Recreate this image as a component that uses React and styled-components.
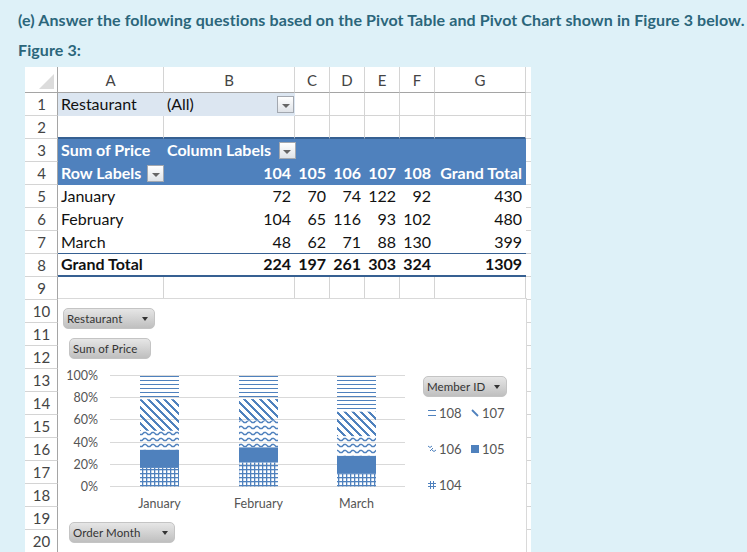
import React from 'react'
import styled, { createGlobalStyle } from 'styled-components'

const COLUMNS = ['A', 'B', 'C', 'D', 'E', 'F', 'G']
const MEMBERS = ['104', '105', '106', '107', '108']
const MONTHS = [
  { name: 'January', values: [72, 70, 74, 122, 92], total: 430, x: 82 },
  { name: 'February', values: [104, 65, 116, 93, 102], total: 480, x: 181 },
  { name: 'March', values: [48, 62, 71, 88, 130], total: 399, x: 279 },
]
const TOTALS = [224, 197, 261, 303, 324]
const TICKS = [
  { label: '100%', y: 10.5 },
  { label: '80%', y: 32.5 },
  { label: '60%', y: 54.5 },
  { label: '40%', y: 77.5 },
  { label: '20%', y: 99.5 },
  { label: '0%', y: 121.5 },
]
const BLUE = '#4f81bd'
const DARK = '#366092'

const Global = createGlobalStyle`
  html, body { margin: 0; padding: 0; }
  body { background: #def1f8; overflow: hidden; height: 552px; }
`

const Page = styled.div`
  width: 747px;
  height: 552px;
  overflow: hidden;
`
const Heading = styled.div`
  padding: 11px 0 0 18px;
  height: 67px;
  box-sizing: border-box;
  font-family: 'Lato', sans-serif;
  font-weight: 700;
  font-size: 16px;
  letter-spacing: 0.1px;
  line-height: 18px;
  color: #2b667b;
  white-space: nowrap;
`
const Figure = styled.div`
  margin-top: 12px;
`
const Sheet = styled.div`
  position: relative;
  margin-left: 25px;
  width: 506px;
  background: #fff;
  display: grid;
  grid-template-columns: 33px 106px 131px repeat(4, 35px) 91px 5px;
  grid-template-rows: 26px;
  grid-auto-rows: 23px;
  font-family: 'Lato', sans-serif;
  font-size: 16px;
  color: #111;
`
const Corner = styled.div`
  border-right: 1px solid #a5a5a5;
  border-bottom: 1px solid #a5a5a5;
  box-sizing: border-box;
  display: flex;
  justify-content: flex-end;
  align-items: flex-end;
  padding: 0 3px 3px 0;
`
const ColHead = styled.div`
  box-sizing: border-box;
  border-right: 1px solid #d4d4d4;
  border-bottom: 1px solid #a5a5a5;
  display: flex;
  align-items: center;
  justify-content: center;
  font-size: 15px;
  color: #444;
`
const RowNum = styled.div`
  box-sizing: border-box;
  border-right: 1px solid #a5a5a5;
  border-bottom: 1px solid #d4d4d4;
  display: flex;
  align-items: center;
  justify-content: center;
  padding-left: 1px;
  font-size: 15px;
  color: #444;
`
const Cell = styled.div`
  box-sizing: border-box;
  display: flex;
  align-items: center;
  justify-content: ${p => (p.$right ? 'flex-end' : 'flex-start')};
  padding: 0 4px 2px 3px;
  white-space: nowrap;
  grid-column: ${p => (p.$span ? `span ${p.$span}` : 'auto')};
  background: ${p => p.$bg || '#fff'};
  color: ${p => p.$color || '#111'};
  font-weight: ${p => (p.$bold ? 700 : 400)};
  border-right: ${p => (p.$plain ? 'none' : '1px solid #d4d4d4')};
  border-bottom: ${p => p.$under || (p.$plain ? 'none' : '1px solid #d4d4d4')};
`
const Tail = styled.div`
  border-bottom: 1px solid #d4d4d4;
`
const Spread = styled.span`
  flex: 1;
`
const FilterBtn = styled.span`
  flex: none;
  width: 17px;
  height: 17px;
  box-sizing: border-box;
  margin-top: 2px;
  margin-left: ${p => p.$gap || 0}px;
  margin-right: ${p => p.$flush || 0}px;
  display: inline-flex;
  align-items: center;
  justify-content: center;
  background: linear-gradient(#fff, #dfe3e8);
  border: 1px solid #a3a8b0;
  &::after {
    content: '';
    border-left: 4px solid transparent;
    border-right: 4px solid transparent;
    border-top: 4px solid #666;
    margin-top: 2px;
  }
`
const ChartPanel = styled.div`
  position: absolute;
  left: 33px;
  top: 231px;
  width: 469px;
  height: 260px;
  box-sizing: border-box;
  background: #fff;
  border-top: 1px solid #d9d9d9;
  border-right: 1px solid #d9d9d9;
  padding: 9px 0 0 5px;
  color: #444;
`
const FieldBtn = styled.div`
  width: ${p => p.$w}px;
  height: 21px;
  box-sizing: border-box;
  margin-left: ${p => p.$indent || 0}px;
  margin-top: ${p => p.$top || 0}px;
  padding: 0 6px 0 3px;
  display: flex;
  align-items: center;
  justify-content: space-between;
  border: 1px solid #c4c4c4;
  border-radius: 5px;
  background: linear-gradient(#e6e6e6, #bfbfbf);
  font-family: 'Lato', sans-serif;
  font-size: 11.5px;
  letter-spacing: 0.1px;
  color: #333;
  white-space: nowrap;
  ${p => p.$caret && `
    &::after {
      content: '';
      border-left: 3.5px solid transparent;
      border-right: 3.5px solid transparent;
      border-top: 4px solid #333;
    }
  `}
`
const ChartBody = styled.div`
  display: flex;
  margin-top: 6px;
  margin-left: -5px;
`
const PlotSvg = styled.svg`
  display: block;
  flex: none;
  text {
    font-family: 'Lato', sans-serif;
    font-size: 12.5px;
    fill: #555;
  }
`
const LegendBox = styled.div`
  margin-top: 11px;
  width: 90px;
`
const LegendGrid = styled.div`
  display: grid;
  grid-template-columns: 43px 43px;
  grid-auto-rows: 36px;
  margin: 5px 0 0 5px;
`
const LegendItem = styled.div`
  display: flex;
  align-items: center;
  gap: 3px;
  height: 22px;
  font-family: 'Lato', sans-serif;
  font-size: 13px;
  color: #555;
`

function Patterns() {
  return (
    <defs>
      <pattern id="p108" width="4" height="4" patternUnits="userSpaceOnUse">
        <rect y="3" width="4" height="1.1" fill={BLUE} />
      </pattern>
      <pattern id="p107" width="8" height="8" patternUnits="userSpaceOnUse">
        <path d="M-2 -2 L10 10 M-2 6 L2 10 M6 -2 L10 2" stroke={BLUE} strokeWidth="2.6" shapeRendering="crispEdges" />
      </pattern>
      <pattern id="p106" width="8" height="6" patternUnits="userSpaceOnUse">
        <path d="M0 1.5 L2 3.5 L4 3.5 L6 1.5 L8 1.5" stroke={BLUE} strokeWidth="1.4" fill="none" />
      </pattern>
      <pattern id="p105" width="4" height="4" patternUnits="userSpaceOnUse">
        <rect width="4" height="4" fill={BLUE} />
      </pattern>
      <pattern id="p104" width="4" height="4" patternUnits="userSpaceOnUse">
        <rect width="1.3" height="4" fill={BLUE} />
        <rect width="4" height="1.3" fill={BLUE} />
      </pattern>
    </defs>
  )
}

function Bar({ month }) {
  let y = 121.5
  return MEMBERS.map((id, i) => {
    const h = (month.values[i] / month.total) * 111
    y -= h
    return <rect key={id} x={month.x} y={y} width="39" height={h} fill={`url(#p${id})`} />
  })
}

function Plot() {
  return (
    <PlotSvg width="365" height="157" viewBox="0 0 365 157">
      <Patterns />
      {TICKS.map(t => (
        <g key={t.label}>
          <line x1="52" x2="347" y1={t.y} y2={t.y} stroke="#d9d9d9" />
          <text x="40" y={t.y + 4.5} textAnchor="end">{t.label}</text>
        </g>
      ))}
      {MONTHS.map(m => (
        <g key={m.name}>
          <Bar month={m} />
          <text x={m.x + 19.5} y="143" textAnchor="middle">{m.name}</text>
        </g>
      ))}
    </PlotSvg>
  )
}

function Swatch({ id }) {
  return (
    <svg width="8" height="8" viewBox="0 0 8 8" fill="none" stroke={BLUE} strokeWidth="1">
      {id === '108' && <path d="M0 1.5 H8 M0 6.5 H8" />}
      {id === '107' && <path d="M1 1 L7 7" strokeWidth="1.8" />}
      {id === '106' && <path d="M0 1 L2 2.5 L4 1 M4 5 L6 6.5 L8 5 M2 6 L5 3" />}
      {id === '105' && <rect width="8" height="8" fill={BLUE} stroke="none" />}
      {id === '104' && <path d="M2.5 0 V8 M5.5 0 V8 M0 2.5 H8 M0 5.5 H8" />}
    </svg>
  )
}

export default function App() {
  return (
    <Page>
      <Global />
      <Heading>
        (e) Answer the following questions based on the Pivot Table and Pivot Chart shown in Figure 3 below.
        <Figure>Figure 3:</Figure>
      </Heading>
      <Sheet>
        <Corner>
          <svg width="15" height="15"><path d="M15 0 V15 H0 Z" fill="#dcdcdc" /></svg>
        </Corner>
        {COLUMNS.map(c => <ColHead key={c}>{c}</ColHead>)}
        <Tail />

        <RowNum>1</RowNum>
        <Cell $bg="#dce6f1" $plain>Restaurant</Cell>
        <Cell $bg="#dce6f1" $plain>(All)<Spread /><FilterBtn $flush={-3} /></Cell>
        {[0, 1, 2, 3, 4].map(i => <Cell key={i} />)}
        <Tail />

        <RowNum>2</RowNum>
        {COLUMNS.map(c => <Cell key={c} $under={`2px solid ${DARK}`} />)}
        <Tail />

        <RowNum>3</RowNum>
        <Cell $bg={BLUE} $color="#fff" $bold $plain>Sum of Price</Cell>
        <Cell $bg={BLUE} $color="#fff" $bold $plain $span={6}>
          Column Labels<FilterBtn $gap={8} />
        </Cell>
        <Tail />

        <RowNum>4</RowNum>
        <Cell $bg={BLUE} $color="#fff" $bold $plain>Row Labels<FilterBtn $gap={6} /></Cell>
        {MEMBERS.map(id => (
          <Cell key={id} $bg={BLUE} $color="#fff" $bold $plain $right>{id}</Cell>
        ))}
        <Cell $bg={BLUE} $color="#fff" $bold $plain $right>Grand Total</Cell>
        <Tail />

        {MONTHS.map((m, r) => {
          const under = r === 2 ? `1px solid ${DARK}` : undefined
          return (
            <React.Fragment key={m.name}>
              <RowNum>{5 + r}</RowNum>
              <Cell $plain $under={under}>{m.name}</Cell>
              {m.values.map((v, i) => (
                <Cell key={i} $plain $right $under={under}>{v}</Cell>
              ))}
              <Cell $plain $right $under={under}>{m.total}</Cell>
              <Tail />
            </React.Fragment>
          )
        })}

        <RowNum>8</RowNum>
        <Cell $plain $bold $under={`2px solid ${DARK}`}>Grand Total</Cell>
        {TOTALS.map((v, i) => (
          <Cell key={i} $plain $bold $right $under={`2px solid ${DARK}`}>{v}</Cell>
        ))}
        <Cell $plain $bold $right $under={`2px solid ${DARK}`}>1309</Cell>
        <Tail />

        {Array.from({ length: 12 }, (_, r) => (
          <React.Fragment key={r}>
            <RowNum>{9 + r}</RowNum>
            {COLUMNS.map(c => <Cell key={c} />)}
            <Tail />
          </React.Fragment>
        ))}

        <ChartPanel>
          <FieldBtn $w={92} $caret>Restaurant</FieldBtn>
          <FieldBtn $w={82} $indent={6} $top={9}>Sum of Price</FieldBtn>
          <ChartBody>
            <Plot />
            <LegendBox>
              <FieldBtn $w={84} $caret>Member ID</FieldBtn>
              <LegendGrid>
                {['108', '107', '106', '105', '104'].map(id => (
                  <LegendItem key={id}><Swatch id={id} />{id}</LegendItem>
                ))}
              </LegendGrid>
            </LegendBox>
          </ChartBody>
          <FieldBtn $w={106} $indent={6} $caret>Order Month</FieldBtn>
        </ChartPanel>
      </Sheet>
    </Page>
  )
}
